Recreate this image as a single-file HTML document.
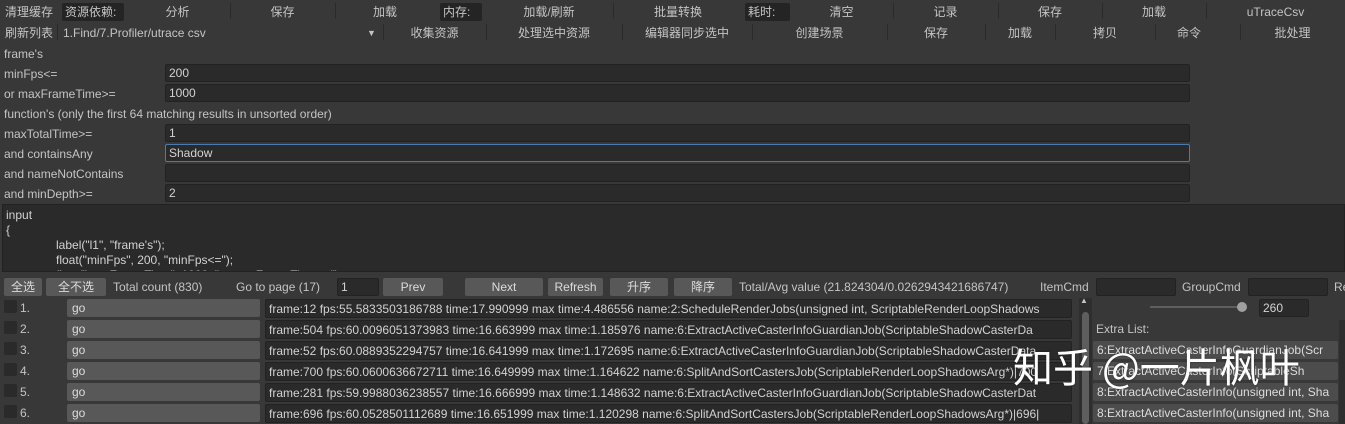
<!DOCTYPE html>
<html><head><meta charset="utf-8"><style>
*{margin:0;padding:0;box-sizing:border-box}
body{width:1345px;height:424px;background:#383838;overflow:hidden;position:relative;font-family:"Liberation Sans","Noto Sans CJK SC",sans-serif;font-size:12px;color:#c4c4c4}
.a{position:absolute;white-space:nowrap;line-height:20px}
.c{text-align:center}
.box{position:absolute;background:#242424;border-radius:2px;line-height:18px;padding-left:3px}
.f{position:absolute;background:#2a2a2a;border:1px solid #222;border-radius:2px;line-height:16px;padding-left:3px;color:#d2d2d2;height:18px}
.sep{position:absolute;width:1px;background:#2a2a2a;height:16px}
.btn{position:absolute;background:#585858;border-radius:2px;text-align:center;line-height:18px;height:18px;color:#dcdcdc}
.cb{position:absolute;left:4px;width:13px;height:13px;background:#2a2a2a;border-radius:2px}
.row{position:absolute;height:19px;line-height:19px}
</style></head><body>
<div class="a" style="left:5px;top:2px">清理缓存</div>
<div class="box" style="left:62px;top:3px;width:62px">资源依赖:</div>
<div class="a c" style="left:125px;top:2px;width:105px">分析</div><div class="sep" style="left:230px;top:3px"></div>
<div class="a c" style="left:230px;top:2px;width:105px">保存</div><div class="sep" style="left:335px;top:3px"></div>
<div class="a c" style="left:335px;top:2px;width:100px">加载</div>
<div class="box" style="left:440px;top:3px;width:42px">内存:</div>
<div class="a c" style="left:485px;top:2px;width:128px">加载/刷新</div><div class="sep" style="left:613px;top:3px"></div>
<div class="a c" style="left:613px;top:2px;width:130px">批量转换</div>
<div class="box" style="left:745px;top:3px;width:45px">耗时:</div>
<div class="a c" style="left:790px;top:2px;width:103px">清空</div><div class="sep" style="left:893px;top:3px"></div>
<div class="a c" style="left:893px;top:2px;width:105px">记录</div><div class="sep" style="left:998px;top:3px"></div>
<div class="a c" style="left:998px;top:2px;width:104px">保存</div><div class="sep" style="left:1102px;top:3px"></div>
<div class="a c" style="left:1102px;top:2px;width:104px">加载</div><div class="sep" style="left:1206px;top:3px"></div>
<div class="a c" style="left:1206px;top:2px;width:139px">uTraceCsv</div>
<div class="a" style="left:5px;top:23px">刷新列表</div>
<div class="sep" style="left:57px;top:24px"></div>
<div class="a" style="left:63px;top:23px">1.Find/7.Profiler/utrace csv</div>
<div class="a" style="left:367px;top:23px;font-size:9px">▼</div>
<div class="sep" style="left:383px;top:24px"></div>
<div class="a c" style="left:383px;top:23px;width:103px">收集资源</div><div class="sep" style="left:486px;top:24px"></div>
<div class="a c" style="left:486px;top:23px;width:136px">处理选中资源</div><div class="sep" style="left:622px;top:24px"></div>
<div class="a c" style="left:622px;top:23px;width:130px">编辑器同步选中</div><div class="sep" style="left:752px;top:24px"></div>
<div class="a c" style="left:752px;top:23px;width:135px">创建场景</div><div class="sep" style="left:887px;top:24px"></div>
<div class="a c" style="left:887px;top:23px;width:98px">保存</div><div class="sep" style="left:985px;top:24px"></div>
<div class="a c" style="left:985px;top:23px;width:70px">加载</div><div class="sep" style="left:1055px;top:24px"></div>
<div class="a c" style="left:1055px;top:23px;width:100px">拷贝</div><div class="sep" style="left:1155px;top:24px"></div>
<div class="a c" style="left:1155px;top:23px;width:68px">命令</div><div class="sep" style="left:1240px;top:24px"></div>
<div class="a c" style="left:1240px;top:23px;width:105px">批处理</div>
<div class="a" style="left:4px;top:44px">frame's</div>
<div class="a" style="left:4px;top:64px">minFps&lt;=</div><div class="f" style="left:165px;top:64px;width:1025px">200</div>
<div class="a" style="left:4px;top:84px">or maxFrameTime&gt;=</div><div class="f" style="left:165px;top:84px;width:1025px">1000</div>
<div class="a" style="left:4px;top:104px">function's (only the first 64 matching results in unsorted order)</div>
<div class="a" style="left:4px;top:124px">maxTotalTime&gt;=</div><div class="f" style="left:165px;top:124px;width:1025px">1</div>
<div class="a" style="left:4px;top:144px">and containsAny</div><div class="f" style="left:165px;top:144px;width:1025px;border-color:#4a7ab0">Shadow</div>
<div class="a" style="left:4px;top:164px">and nameNotContains</div><div class="f" style="left:165px;top:164px;width:1025px"></div>
<div class="a" style="left:4px;top:184px">and minDepth&gt;=</div><div class="f" style="left:165px;top:184px;width:1025px">2</div>
<div style="position:absolute;left:2px;top:204px;width:1343px;height:68px;background:#2a2a2a;border:1px solid #222;overflow:hidden;color:#d2d2d2;line-height:15px;padding:3px 3px">input<br>{<br><span style="padding-left:50px">label("l1", "frame's");</span><br><span style="padding-left:50px">float("minFps", 200, "minFps&lt;=");</span><br><span style="padding-left:50px">float("maxFrameTime", 1000, "or maxFrameTime&gt;=");</span></div>
<div class="btn" style="left:4px;top:278px;width:38px">全选</div>
<div class="btn" style="left:46px;top:278px;width:60px">全不选</div>
<div class="a" style="left:113px;top:277px">Total count (830)</div>
<div class="a" style="left:236px;top:277px">Go to page (17)</div>
<div class="f" style="left:337px;top:278px;width:42px;height:18px">1</div>
<div class="btn" style="left:383px;top:278px;width:60px">Prev</div>
<div class="btn" style="left:465px;top:278px;width:78px">Next</div>
<div class="btn" style="left:548px;top:278px;width:55px">Refresh</div>
<div class="btn" style="left:610px;top:278px;width:58px">升序</div>
<div class="btn" style="left:674px;top:278px;width:58px">降序</div>
<div class="a" style="left:739px;top:277px">Total/Avg value (21.824304/0.0262943421686747)</div>
<div class="a" style="left:1040px;top:277px">ItemCmd</div>
<div class="f" style="left:1096px;top:278px;width:80px;height:18px"></div>
<div class="a" style="left:1182px;top:277px">GroupCmd</div>
<div class="f" style="left:1248px;top:278px;width:80px;height:18px"></div>
<div class="a" style="left:1334px;top:277px">Re</div>
<div class="cb" style="top:300px"></div><div class="a" style="left:20px;top:298px">1.</div><div class="btn" style="left:67px;top:299px;width:193px;text-align:left;padding-left:5px">go</div><div class="f row" style="left:265px;top:299px;width:807px">frame:12 fps:55.5833503186788 time:17.990999 max time:4.486556 name:2:ScheduleRenderJobs(unsigned int, ScriptableRenderLoopShadows</div>
<div class="cb" style="top:321px"></div><div class="a" style="left:20px;top:319px">2.</div><div class="btn" style="left:67px;top:320px;width:193px;text-align:left;padding-left:5px">go</div><div class="f row" style="left:265px;top:320px;width:807px">frame:504 fps:60.0096051373983 time:16.663999 max time:1.185976 name:6:ExtractActiveCasterInfoGuardianJob(ScriptableShadowCasterDa</div>
<div class="cb" style="top:342px"></div><div class="a" style="left:20px;top:340px">3.</div><div class="btn" style="left:67px;top:341px;width:193px;text-align:left;padding-left:5px">go</div><div class="f row" style="left:265px;top:341px;width:807px">frame:52 fps:60.0889352294757 time:16.641999 max time:1.172695 name:6:ExtractActiveCasterInfoGuardianJob(ScriptableShadowCasterData</div>
<div class="cb" style="top:363px"></div><div class="a" style="left:20px;top:361px">4.</div><div class="btn" style="left:67px;top:362px;width:193px;text-align:left;padding-left:5px">go</div><div class="f row" style="left:265px;top:362px;width:807px">frame:700 fps:60.0600636672711 time:16.649999 max time:1.164622 name:6:SplitAndSortCastersJob(ScriptableRenderLoopShadowsArg*)|700</div>
<div class="cb" style="top:384px"></div><div class="a" style="left:20px;top:382px">5.</div><div class="btn" style="left:67px;top:383px;width:193px;text-align:left;padding-left:5px">go</div><div class="f row" style="left:265px;top:383px;width:807px">frame:281 fps:59.9988036238557 time:16.666999 max time:1.148632 name:6:ExtractActiveCasterInfoGuardianJob(ScriptableShadowCasterDat</div>
<div class="cb" style="top:405px"></div><div class="a" style="left:20px;top:403px">6.</div><div class="btn" style="left:67px;top:404px;width:193px;text-align:left;padding-left:5px">go</div><div class="f row" style="left:265px;top:404px;width:807px">frame:696 fps:60.0528501112689 time:16.651999 max time:1.120298 name:6:SplitAndSortCastersJob(ScriptableRenderLoopShadowsArg*)|696|</div>
<div style="position:absolute;left:1079px;top:298px;width:13px;height:126px;background:#2e2e2e"></div>
<div style="position:absolute;left:1082px;top:312px;width:7px;height:112px;background:#5e5e5e;border-radius:4px"></div>
<div class="a" style="left:1080px;top:291px;font-size:8px">▲</div>
<div style="position:absolute;left:1150px;top:306px;width:95px;height:2px;background:#5e5e5e"></div>
<div style="position:absolute;left:1237px;top:302px;width:10px;height:10px;border-radius:50%;background:#a0a0a0"></div>
<div class="f" style="left:1259px;top:299px;width:50px;height:18px">260</div>
<div class="a" style="left:1096px;top:319px">Extra List:</div>
<div class="btn" style="left:1093px;top:341px;width:245px;text-align:left;padding-left:4px;background:#4c4c4c;overflow:hidden">6:ExtractActiveCasterInfoGuardianJob(Scr</div>
<div class="btn" style="left:1093px;top:362px;width:245px;text-align:left;padding-left:4px;background:#4c4c4c;overflow:hidden">7:ExtractActiveCasterInfo(ScriptableSh</div>
<div class="btn" style="left:1093px;top:383px;width:245px;text-align:left;padding-left:4px;background:#4c4c4c;overflow:hidden">8:ExtractActiveCasterInfo(unsigned int, Sha</div>
<div class="btn" style="left:1093px;top:404px;width:245px;text-align:left;padding-left:4px;background:#4c4c4c;overflow:hidden">8:ExtractActiveCasterInfo(unsigned int, Sha</div>
<div style="position:absolute;left:1339px;top:320px;width:6px;height:104px;background:#2e2e2e"></div>
<div class="a" style="left:1013px;top:342px;font-size:40px;line-height:46px;color:#fff;font-family:'Noto Sans CJK SC',sans-serif;text-shadow:0 0 2px rgba(0,0,0,.4)">知乎 @一片枫叶</div>
</body></html>
